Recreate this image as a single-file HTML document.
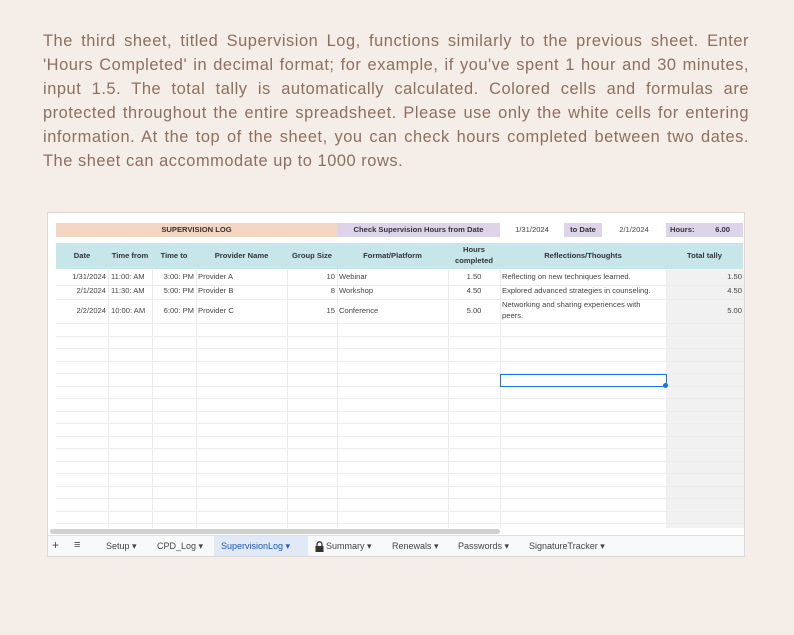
<!DOCTYPE html>
<html><head><meta charset="utf-8"><style>
body{margin:0;width:794px;height:635px;background:#f5eee8;position:relative;overflow:hidden;font-family:"Liberation Sans",sans-serif}
.p{position:absolute;left:43px;top:29px;width:706px;font-size:16.4px;line-height:24px;color:#8b6f60;text-align:justify;letter-spacing:0.55px}
.sh{position:absolute;left:47px;top:212px;width:698px;height:345px;background:#fff;border:1px solid #d8d8d8;box-sizing:border-box;overflow:hidden}
.a{position:absolute;font-size:7.6px;color:#444;white-space:nowrap;line-height:12px}
.v{position:absolute;width:1px;background:#ececec}
.h{position:absolute;height:1px;background:#ececec;left:8px;width:688px}
.b{position:absolute}
.c{text-align:center}
.r{text-align:right}
.bold{font-weight:bold;color:#333}
.tab{position:absolute;top:541px;font-size:9px;color:#444}
</style></head><body>
<div class="p">The third sheet, titled Supervision Log, functions similarly to the previous sheet. Enter 'Hours Completed' in decimal format; for example, if you've spent 1 hour and 30 minutes, input 1.5. The total tally is automatically calculated. Colored cells and formulas are protected throughout the entire spreadsheet. Please use only the white cells for entering information. At the top of the sheet, you can check hours completed between two dates. The sheet can accommodate up to 1000 rows.</div>

<div class="sh">
<div class="b" style="left:618px;top:56px;width:78px;height:259px;background:#f1f1f1"></div>
<div class="v" style="left:60px;top:56px;height:259px"></div>
<div class="v" style="left:104px;top:56px;height:259px"></div>
<div class="v" style="left:148px;top:56px;height:259px"></div>
<div class="v" style="left:239px;top:56px;height:259px"></div>
<div class="v" style="left:289px;top:56px;height:259px"></div>
<div class="v" style="left:400px;top:56px;height:259px"></div>
<div class="v" style="left:452px;top:56px;height:259px"></div>
<div class="v" style="left:618px;top:56px;height:259px"></div>
<div class="h" style="top:72px"></div><div class="h" style="top:86px"></div><div class="h" style="top:110px"></div>
<div class="h" style="top:123px"></div><div class="h" style="top:135px"></div><div class="h" style="top:148px"></div>
<div class="h" style="top:160px"></div><div class="h" style="top:173px"></div><div class="h" style="top:185px"></div>
<div class="h" style="top:198px"></div><div class="h" style="top:210px"></div><div class="h" style="top:223px"></div>
<div class="h" style="top:235px"></div><div class="h" style="top:248px"></div><div class="h" style="top:260px"></div>
<div class="h" style="top:273px"></div><div class="h" style="top:285px"></div><div class="h" style="top:298px"></div>
<div class="h" style="top:310px"></div>
<div class="b" style="left:8px;top:10px;width:281px;height:14px;background:#f2d6c2"></div>
<div class="a c bold" style="left:8px;top:11px;width:281px">SUPERVISION LOG</div>
<div class="b" style="left:289px;top:10px;width:163px;height:14px;background:#ddd4ea"></div>
<div class="a c bold" style="left:289px;top:11px;width:163px">Check Supervision Hours from Date</div>
<div class="a c" style="left:452px;top:11px;width:64px">1/31/2024</div>
<div class="b" style="left:516px;top:10px;width:38px;height:14px;background:#ddd4ea"></div>
<div class="a c bold" style="left:516px;top:11px;width:38px">to Date</div>
<div class="a c" style="left:554px;top:11px;width:64px">2/1/2024</div>
<div class="b" style="left:618px;top:10px;width:77px;height:14px;background:#ddd4ea"></div>
<div class="a bold" style="left:622px;top:11px">Hours:</div>
<div class="a bold r" style="left:650px;top:11px;width:32px">6.00</div>
<div class="b" style="left:8px;top:30px;width:687px;height:26px;background:#c6e6ea"></div>
<div class="a c bold" style="left:8px;top:37px;width:52px">Date</div>
<div class="a c bold" style="left:60px;top:37px;width:44px">Time from</div>
<div class="a c bold" style="left:104px;top:37px;width:44px">Time to</div>
<div class="a c bold" style="left:148px;top:37px;width:91px">Provider Name</div>
<div class="a c bold" style="left:239px;top:37px;width:50px">Group Size</div>
<div class="a c bold" style="left:289px;top:37px;width:111px">Format/Platform</div>
<div class="a c bold" style="left:400px;top:31px;width:52px;line-height:11px;white-space:normal">Hours<br>completed</div>
<div class="a c bold" style="left:452px;top:37px;width:166px">Reflections/Thoughts</div>
<div class="a c bold" style="left:618px;top:37px;width:77px">Total tally</div>
<div class="a r" style="left:8px;top:58px;width:50px">1/31/2024</div>
<div class="a" style="left:63px;top:58px">11:00: AM</div>
<div class="a r" style="left:104px;top:58px;width:42px">3:00: PM</div>
<div class="a" style="left:150px;top:58px">Provider A</div>
<div class="a r" style="left:239px;top:58px;width:48px">10</div>
<div class="a" style="left:291px;top:58px">Webinar</div>
<div class="a c" style="left:400px;top:58px;width:52px">1.50</div>
<div class="a" style="left:454px;top:58px">Reflecting on new techniques learned.</div>
<div class="a r" style="left:618px;top:58px;width:76px">1.50</div>
<div class="a r" style="left:8px;top:72px;width:50px">2/1/2024</div>
<div class="a" style="left:63px;top:72px">11:30: AM</div>
<div class="a r" style="left:104px;top:72px;width:42px">5:00: PM</div>
<div class="a" style="left:150px;top:72px">Provider B</div>
<div class="a r" style="left:239px;top:72px;width:48px">8</div>
<div class="a" style="left:291px;top:72px">Workshop</div>
<div class="a c" style="left:400px;top:72px;width:52px">4.50</div>
<div class="a" style="left:454px;top:72px">Explored advanced strategies in counseling.</div>
<div class="a r" style="left:618px;top:72px;width:76px">4.50</div>
<div class="a r" style="left:8px;top:92px;width:50px">2/2/2024</div>
<div class="a" style="left:63px;top:92px">10:00: AM</div>
<div class="a r" style="left:104px;top:92px;width:42px">6:00: PM</div>
<div class="a" style="left:150px;top:92px">Provider C</div>
<div class="a r" style="left:239px;top:92px;width:48px">15</div>
<div class="a" style="left:291px;top:92px">Conference</div>
<div class="a c" style="left:400px;top:92px;width:52px">5.00</div>
<div class="a" style="left:454px;top:86px;line-height:11px">Networking and sharing experiences with<br>peers.</div>
<div class="a r" style="left:618px;top:92px;width:76px">5.00</div>
<div class="b" style="left:452px;top:161px;width:165px;height:11px;border:1px solid #1a73e8"></div>
<div class="b" style="left:615px;top:170px;width:5px;height:5px;background:#1a73e8;border-radius:50%"></div>
<div class="b" style="left:0;top:315px;width:696px;height:7px;background:#fff"></div>
<div class="b" style="left:2px;top:316px;width:450px;height:5px;background:#d0d0d0;border-radius:3px"></div>
<div class="b" style="left:0;top:322px;width:696px;height:23px;background:#f8f9fa;border-top:1px solid #e0e0e0"></div>
<div class="b" style="left:166px;top:323px;width:94px;height:22px;background:#e1e9f7"></div>
</div>
<div class="tab" style="left:52px;font-size:12px;top:538px">+</div>
<div class="tab" style="left:74px;font-size:11px;top:539px">≡</div>
<div class="tab" style="left:106px">Setup ▾</div>
<div class="tab" style="left:157px">CPD_Log ▾</div>
<div class="tab" style="left:221px;color:#1a57c4">SupervisionLog ▾</div>
<svg style="position:absolute;left:315px;top:541px" width="9" height="11" viewBox="0 0 9 11"><path d="M2 5V3.3a2.5 2.5 0 0 1 5 0V5" fill="none" stroke="#333" stroke-width="1.3"/><rect x="0.5" y="5" width="8" height="6" fill="#333"/></svg>
<div class="tab" style="left:326px">Summary ▾</div>
<div class="tab" style="left:392px">Renewals ▾</div>
<div class="tab" style="left:458px">Passwords ▾</div>
<div class="tab" style="left:529px">SignatureTracker ▾</div>
</body></html>
